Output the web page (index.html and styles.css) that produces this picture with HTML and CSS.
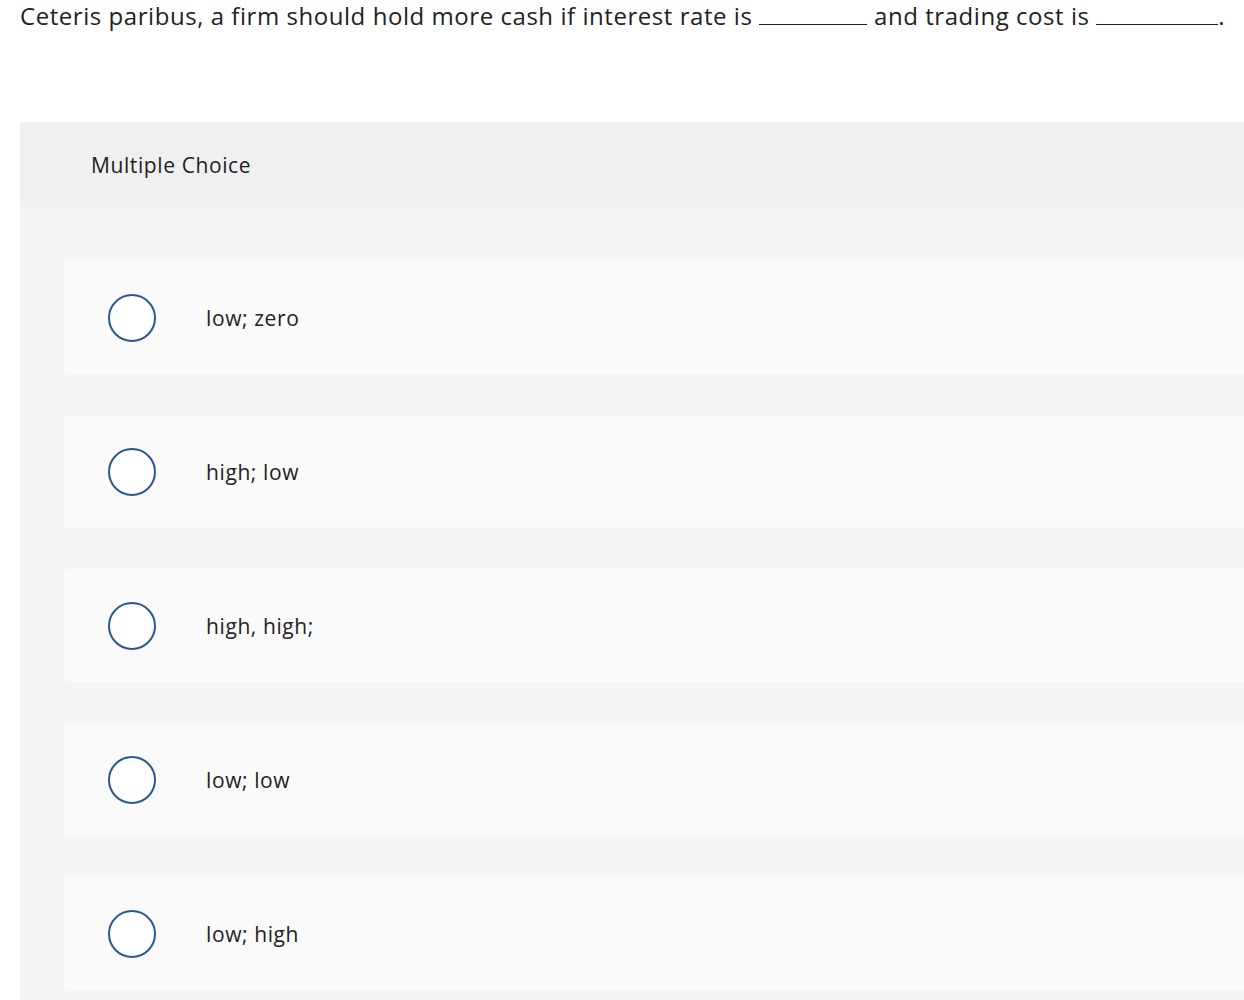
FILE: index.html
```html
<!DOCTYPE html>
<html>
<head>
<meta charset="utf-8">
<link rel="stylesheet" href="styles.css">
</head>
<body>
<p class="question">Ceteris paribus, a firm should hold more cash if interest rate is <span class="blank"></span> and trading cost is <span class="blank blank-long"></span>.</p>
<section class="mc">
  <div class="mc-header">Multiple Choice</div>
  <div class="mc-body">
    <div class="option"><span class="radio"></span><span class="label">low; zero</span></div>
    <div class="option"><span class="radio"></span><span class="label">high; low</span></div>
    <div class="option"><span class="radio"></span><span class="label">high, high;</span></div>
    <div class="option"><span class="radio"></span><span class="label">low; low</span></div>
    <div class="option"><span class="radio"></span><span class="label">low; high</span></div>
  </div>
</section>
</body>
</html>
```
FILE: styles.css
```css
html, body {
  margin: 0;
  padding: 0;
  background: #ffffff;
  overflow: hidden;
}
body {
  font-family: "Open Sans", "Lato", sans-serif;
  font-variant-ligatures: none;
  color: #222222;
  padding-left: 20px;
  letter-spacing: 0.6px;
}
.question {
  margin: 0;
  padding-top: 1px;
  font-size: 24px;
  line-height: 30px;
  white-space: nowrap;
  letter-spacing: 0.55px;
}
.blank {
  display: inline-block;
  width: 108px;
  border-bottom: 1px solid #222;
  vertical-align: baseline;
}
.blank-long {
  width: 122px;
}
.mc {
  margin-top: 91px;
  width: 1260px;
  background: #f5f5f5;
  border-radius: 4px 0 0 0;
  overflow: hidden;
}
.mc-header {
  background: #f0f0f0;
  height: 85px;
  display: flex;
  align-items: center;
  padding-left: 71px;
  font-size: 21px;
  color: #222;
}
.mc-body {
  padding: 54px 0 40px 44px;
  display: flex;
  flex-direction: column;
  gap: 41px;
}
.option {
  background: #fafafa;
  border-radius: 5px 0 0 5px;
  height: 113px;
  display: flex;
  align-items: center;
  padding-left: 44px;
}
.radio {
  width: 44px;
  height: 44px;
  border: 2px solid #2b5891;
  border-radius: 50%;
  background: #fff;
  flex: none;
}
.label {
  margin-left: 50px;
  font-size: 21px;
  color: #222;
}
```
